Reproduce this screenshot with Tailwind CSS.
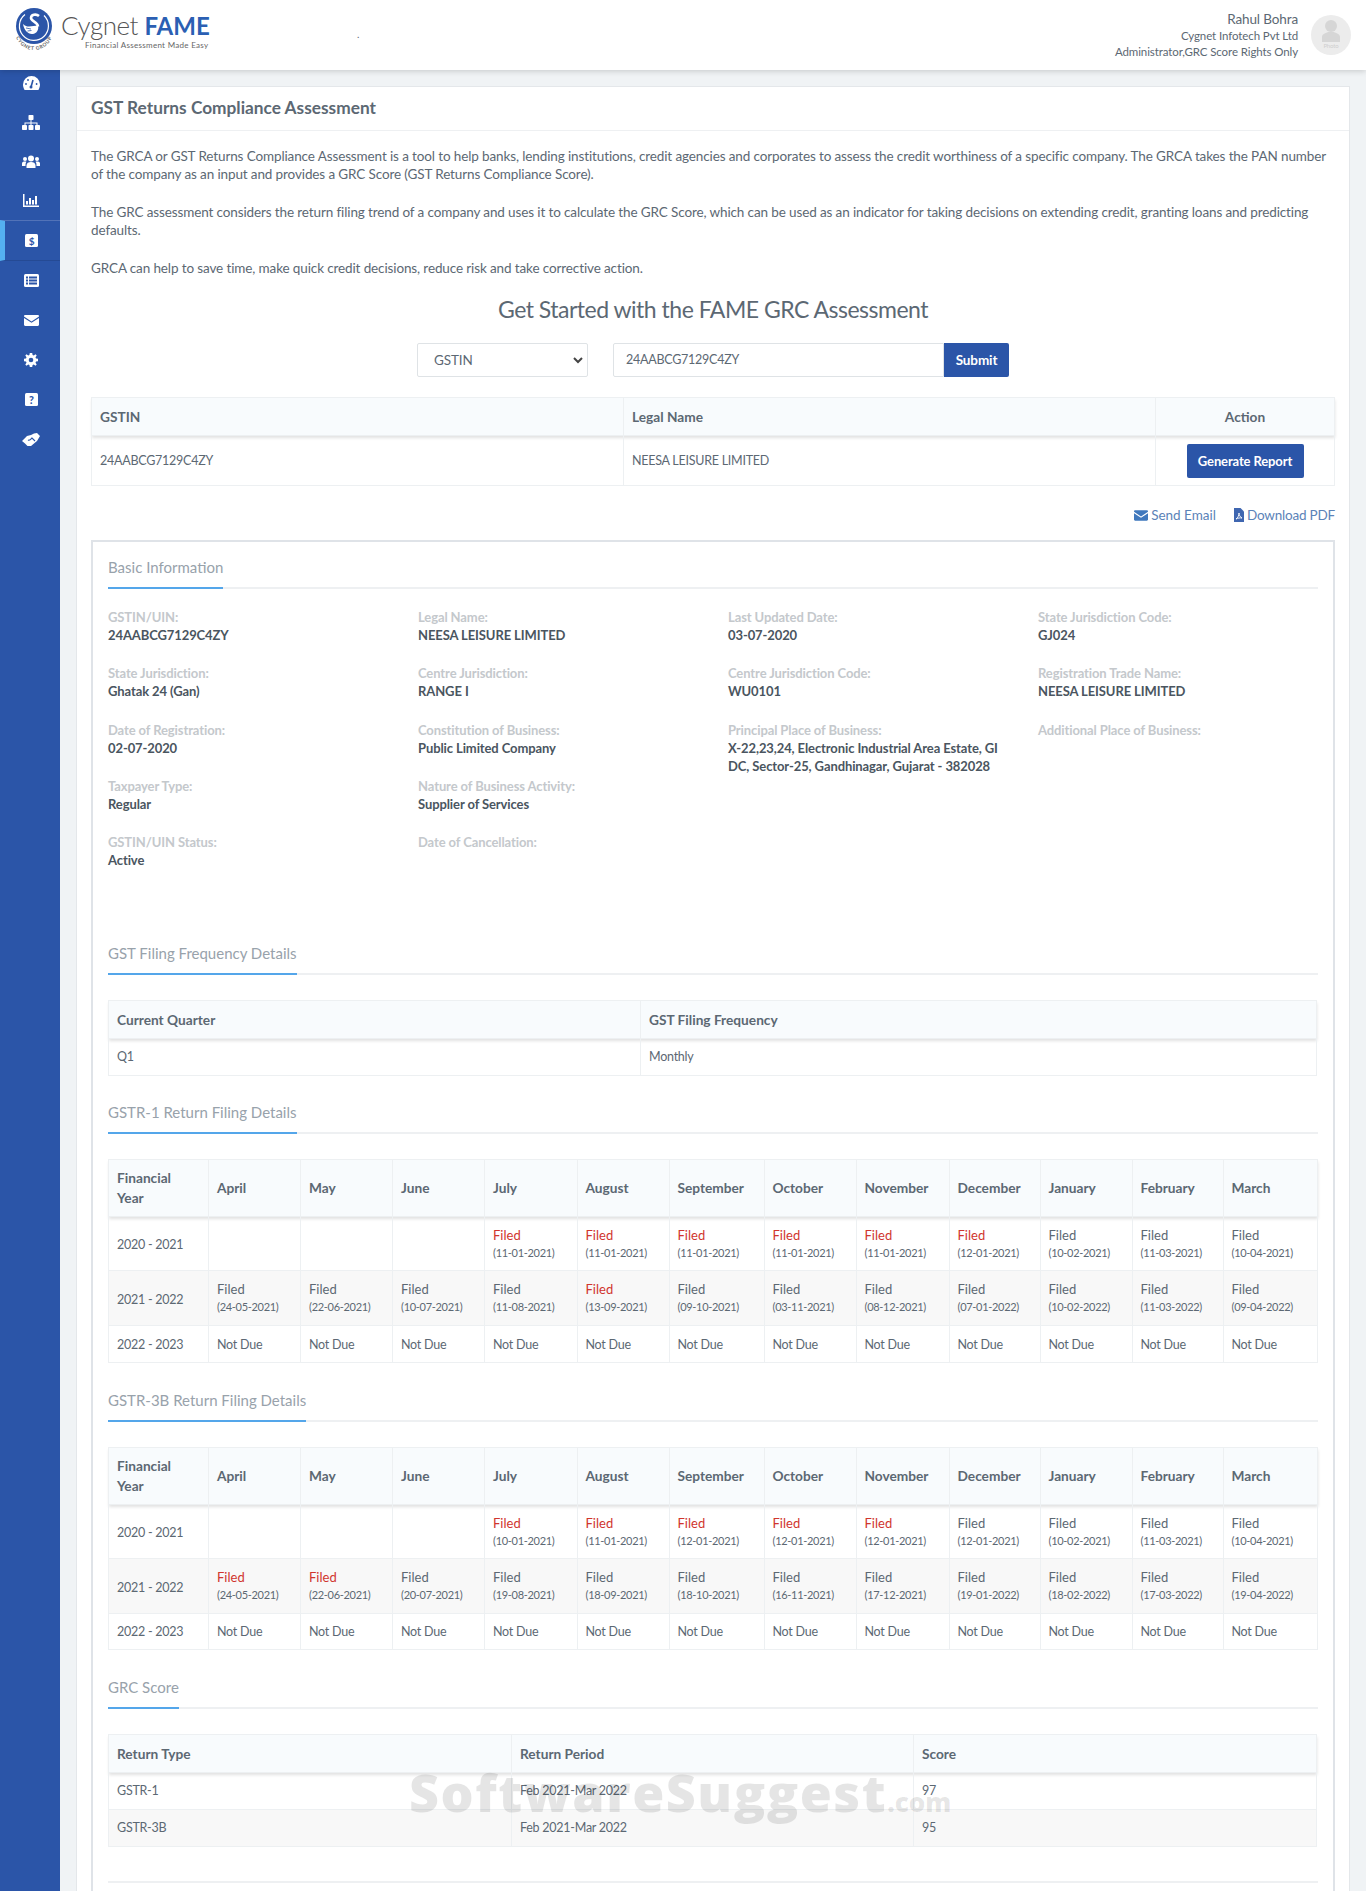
<!DOCTYPE html>
<html lang="en">
<head>
  <meta charset="UTF-8" />
  <title>GST Returns Compliance Assessment</title>
  <script src="https://cdn.jsdelivr.net/npm/@tailwindcss/browser@4"></script>
</head>
<body class="bg-[#f0f3f5] text-[#5c6873] font-['Lato',sans-serif] text-[13.5px] tracking-[-0.12px]">
  <div class="w-[1366px] h-[1891px] overflow-hidden relative">

    <!-- header -->
    <header class="relative z-10 h-[70px] bg-white shadow-[0_1px_6px_rgba(0,0,0,0.18)] flex items-start">
      <div class="w-[216px] h-[60px] flex items-start">
        <svg class="ml-[12px] mt-[5px]" width="44" height="50" viewBox="0 0 44 50">
          <defs><path id="logoArc" d="M3 26a19 19 0 0 0 38 0"/></defs>
          <circle cx="22" cy="21" r="18" fill="#2b55a8"/>
          <path d="M13 9.500A14.500 14.500 0 1 0 32 10.500" fill="none" stroke="#fff" stroke-width="1.200"/>
          <path d="M27 11c-3-2.500-8-1.500-8 2 0 3.500 7 4 7 8.500" fill="none" stroke="#fff" stroke-width="2.600"/>
          <path d="M11 19c2 2 4 2.500 6 2.500l9-1c1 4-1 8-5.500 8.500-4.500.4-8.500-4-9.500-10z" fill="#fff"/>
          <path d="M14 23l5 1M15.500 26l4-.5" stroke="#2b55a8" stroke-width=".8"/>
          <text font-size="5" font-weight="700" fill="#666" letter-spacing="0.7"><textPath href="#logoArc" startOffset="50%" text-anchor="middle">CYGNET GROUP</textPath></text>
        </svg>
        <div class="ml-[5px] mt-[11px] whitespace-nowrap tracking-normal">
          <div class="leading-[29px] text-[26px] font-light tracking-[-0.5px] text-[#555]">Cygnet <span class="text-[24px] font-bold tracking-normal text-[#2b5fb3]">FAME</span></div>
          <div class="text-[8px] leading-[10px] ml-[24px] tracking-[0.3px] text-[#666]">Financial Assessment Made Easy</div>
        </div>
      </div>
      <div class="ml-[141px] mt-[28px] text-[10px] leading-[12px]">.</div>
      <div class="ml-auto mt-[11px] text-right">
        <div class="text-[13.500px] leading-[17px]">Rahul Bohra</div>
        <div class="text-[11.500px] tracking-[-0.1px] leading-[16px]">Cygnet Infotech Pvt Ltd</div>
        <div class="text-[11.500px] tracking-[-0.1px] leading-[16px]">Administrator,GRC Score Rights Only</div>
      </div>
      <div class="ml-[13px] mr-[15px] mt-[15px] w-[40px] h-[40px] rounded-full bg-[#ececec] flex flex-col items-center overflow-hidden">
        <svg class="mt-[5px]" width="20" height="22" viewBox="0 0 20 22"><circle cx="10" cy="6" r="6" fill="#d6d6d6"/><path d="M1 22v-5c0-3 4-4 6-5h6c2 1 6 2 6 5v5z" fill="#d6d6d6"/></svg>
        <div class="text-[6px] leading-[7px] text-[#cfcfcf]">Photo</div>
      </div>
    </header>

    <div class="flex">
      <!-- sidebar -->
      <nav class="w-[60px] h-[1821px] bg-[#2b55a8] shrink-0 flex flex-col">
        <div class="-mt-[7px] h-[40px] pl-[2px] flex items-center justify-center"><svg width="17" height="14" viewBox="0 0 17 14"><path d="M8.500 0A8.500 8.500 0 0 0 0 8.500c0 2 .6 3.700 1.600 5.500h13.800c1-1.800 1.600-3.500 1.600-5.500A8.500 8.500 0 0 0 8.500 0z" fill="#fff"/><path d="M8 11l2-7" stroke="#2b55a8" stroke-width="1.600"/><circle cx="8" cy="11" r="1.500" fill="#2b55a8"/><circle cx="3" cy="8" r=".9" fill="#2b55a8"/><circle cx="5" cy="4" r=".9" fill="#2b55a8"/><circle cx="13.600" cy="8" r=".9" fill="#2b55a8"/></svg></div>
        <div class="h-[39px] pl-[2px] flex items-center justify-center"><svg width="18" height="15" viewBox="0 0 18 15" fill="#fff"><rect x="6.500" y="0" width="5" height="5" rx=".8"/><rect x="0" y="10" width="5" height="5" rx=".8"/><rect x="6.500" y="10" width="5" height="5" rx=".8"/><rect x="13" y="10" width="5" height="5" rx=".8"/><path d="M8.500 5h1v2.500h6V10h-1V8.500h-5V10h-1V8.500h-5V10h-1V7.500h6z"/></svg></div>
        <div class="h-[39px] pl-[2px] flex items-center justify-center"><svg width="18" height="13" viewBox="0 0 18 13" fill="#fff"><circle cx="9" cy="3.500" r="3"/><circle cx="3" cy="4" r="2"/><circle cx="15" cy="4" r="2"/><path d="M4.500 13v-2.500c0-2.500 2-3.500 4.500-3.500s4.500 1 4.500 3.500V13z"/><path d="M3.500 11H0V8.500C0 7 1.300 6.500 3 6.500c.6 0 1 .1 1.400.3C3.800 7.700 3.500 8.800 3.500 11zM14.500 11H18V8.500c0-1.500-1.300-2-3-2-.6 0-1 .1-1.400.3.600.9.900 2 .9 4.200z"/></svg></div>
        <div class="h-[39px] pl-[2px] flex items-center justify-center"><svg width="16" height="13" viewBox="0 0 16 13" fill="#fff"><path d="M0 0h1.500v11.500H16V13H0z"/><rect x="3" y="7" width="2" height="3.500"/><rect x="6" y="4" width="2" height="6.500"/><rect x="9" y="6" width="2" height="4.500"/><rect x="12" y="2" width="2" height="8.500"/></svg></div>
        <div class="h-[41px] border-t border-t-[#5273b8] border-b border-b-[#254a94] border-l-[5px] border-l-[#54b0f0] pr-[3px] flex items-center justify-center"><svg width="13" height="13" viewBox="0 0 13 13"><rect width="13" height="13" rx="1.500" fill="#fff"/><text x="6.500" y="10.500" text-anchor="middle" font-size="10" font-weight="700" fill="#2b55a8">$</text></svg></div>
        <div class="h-[39px] pl-[2px] flex items-center justify-center"><svg width="15" height="13" viewBox="0 0 15 13"><rect width="15" height="13" rx="1.500" fill="#fff"/><g fill="#2b55a8"><rect x="2" y="2.500" width="2" height="2"/><rect x="2" y="5.500" width="2" height="2"/><rect x="2" y="8.500" width="2" height="2"/><rect x="5" y="2.500" width="8" height="2"/><rect x="5" y="5.500" width="8" height="2"/><rect x="5" y="8.500" width="8" height="2"/></g></svg></div>
        <div class="h-[40px] pl-[2px] flex items-center justify-center"><svg width="15" height="11" viewBox="0 0 15 11" fill="#fff"><path d="M1.200 0h12.600c.6 0 1.200.5 1.200 1.200v.4L7.500 6.500 0 1.600v-.4C0 .5.600 0 1.200 0z"/><path d="M0 3l7.500 4.800L15 3v6.800c0 .7-.6 1.200-1.200 1.200H1.200C.6 11 0 10.500 0 9.800z"/></svg></div>
        <div class="h-[40px] pl-[2px] flex items-center justify-center"><svg width="14" height="14" viewBox="0 0 14 14"><path d="M5.800 0h2.400l.4 2 1.200.5L11.500 1.300l1.200 1.200-1.200 1.700.5 1.200 2 .4v2.400l-2 .4-.5 1.200 1.200 1.700-1.200 1.200-1.700-1.200-1.200.5-.4 2H5.800l-.4-2-1.200-.5-1.700 1.200-1.200-1.200 1.200-1.700-.5-1.200-2-.4V5.800l2-.4.5-1.200-1.200-1.700 1.200-1.200 1.700 1.200 1.200-.5z" fill="#fff"/><circle cx="7" cy="7" r="2.300" fill="#2b55a8"/></svg></div>
        <div class="h-[39px] pl-[2px] flex items-center justify-center"><svg width="13" height="13" viewBox="0 0 13 13"><rect width="13" height="13" rx="1.500" fill="#fff"/><text x="6.500" y="10.500" text-anchor="middle" font-size="10.500" font-weight="900" fill="#2b55a8">?</text></svg></div>
        <div class="h-[40px] pl-[2px] flex items-center justify-center"><svg width="18" height="13" viewBox="0 0 18 13"><path d="M0 8l5-5 4-1 3-1.500 3-.5 3 3-3 5-6 5-3 .5-3-3z" fill="#fff"/><path d="M6 7c2 1 3-1 4-2l3 3" fill="none" stroke="#2b55a8" stroke-width="1.100"/></svg></div>
      </nav>

      <!-- main -->
      <main class="flex-1 pt-[16px] px-[16px]">
        <div class="bg-white border border-[#e4e7ea] h-[1900px]">
          <h1 class="h-[44px] px-[14px] pb-[1px] border-b border-[#eef0f2] flex items-center text-[17.300px] tracking-normal font-bold">GST Returns Compliance Assessment</h1>

          <div class="px-[14px] pt-[16px] leading-[18px]">
            <p>The GRCA or GST Returns Compliance Assessment is a tool to help banks, lending institutions, credit agencies and corporates to assess the credit worthiness of a specific company. The GRCA takes the PAN number of the company as an input and provides a GRC Score (GST Returns Compliance Score).</p>
            <p class="mt-[20px]">The GRC assessment considers the return filing trend of a company and uses it to calculate the GRC Score, which can be used as an indicator for taking decisions on extending credit, granting loans and predicting defaults.</p>
            <p class="mt-[20px]">GRCA can help to save time, make quick credit decisions, reduce risk and take corrective action.</p>

            <h2 class="mt-[16px] text-center text-[23px] tracking-[-0.5px] leading-[32px]">Get Started with the FAME GRC Assessment</h2>

            <form class="mt-[18px] h-[34px] flex" onsubmit="return false">
              <div class="ml-[326px] w-[171px] border border-[#dfe3e6] rounded-[2px] pl-[16px] pr-[4px] flex items-center justify-between">
                <span>GSTIN</span>
                <svg width="10" height="7" viewBox="0 0 10 7"><path d="M1 1l4 4 4-4" fill="none" stroke="#444" stroke-width="2"/></svg>
              </div>
              <div class="ml-[25px] w-[331px] border border-[#dfe3e6] rounded-l-[2px] pl-[12px] flex items-center text-[12.500px] tracking-[-0.25px]">24AABCG7129C4ZY</div>
              <button class="w-[65px] bg-[#2b55a8] text-white font-bold rounded-r-[2px]">Submit</button>
            </form>

            <table class="mt-[20px] w-[1244px] table-fixed border-collapse">
              <thead>
                <tr class="h-[38px] bg-[#f8fbfd] shadow-[0_2px_3px_rgba(0,0,0,0.12)]">
                  <th class="w-[532px] border border-[#edf0f2] px-[8px] text-left text-[13.700px] tracking-normal font-bold">GSTIN</th>
                  <th class="w-[532px] border border-[#edf0f2] px-[8px] text-left text-[13.700px] tracking-normal font-bold">Legal Name</th>
                  <th class="border border-[#edf0f2] px-[8px] text-center text-[13.700px] tracking-normal font-bold">Action</th>
                </tr>
              </thead>
              <tbody>
                <tr class="h-[50px]">
                  <td class="border border-[#edf0f2] px-[8px] text-[12.500px] tracking-[-0.25px]">24AABCG7129C4ZY</td>
                  <td class="border border-[#edf0f2] px-[8px] text-[12.500px] tracking-[-0.25px]">NEESA LEISURE LIMITED</td>
                  <td class="border border-[#edf0f2] text-center"><button class="w-[117px] h-[34px] bg-[#2b55a8] text-white text-[13px] font-bold rounded-[2px]">Generate Report</button></td>
                </tr>
              </tbody>
            </table>

            <div class="mt-[20px] h-[18px] flex justify-end items-center gap-[18px] text-[#5b83b8] text-[13.500px] tracking-[-0.2px]">
              <span class="flex items-center gap-[3px] tracking-normal"><svg width="14" height="11" viewBox="0 0 15 11" fill="#3f78bd"><path d="M1.200 0h12.600c.6 0 1.200.5 1.200 1.200v.4L7.500 6.500 0 1.600v-.4C0 .5.600 0 1.200 0z"/><path d="M0 3l7.500 4.800L15 3v6.800c0 .7-.6 1.200-1.200 1.200H1.200C.6 11 0 10.500 0 9.800z"/></svg>Send Email</span>
              <span class="flex items-center gap-[3px]"><svg width="10" height="14" viewBox="0 0 10 14"><path d="M0 0h6.500L10 3.500V14H0z" fill="#3f66b0"/><path d="M2 11c2-1 3-4 3-6 0 2 1 4 3 5-2-.3-4 0-6 1z" fill="none" stroke="#fff" stroke-width=".9"/></svg>Download PDF</span>
            </div>

            <!-- report box -->
            <div class="mt-[16px] border-2 border-[#dfe3e8] px-[15px] h-[1400px] relative">
              <div id="basic"></div>
            </div>
          </div>
        </div>
      </main>
    </div>

    <!-- watermark over the score table -->
    <div class="absolute left-[409px] top-[1761px] font-['Open_Sans',sans-serif] text-[52px] leading-[62px] font-extrabold tracking-[1.5px] text-black/10 whitespace-nowrap pointer-events-none">SoftwareSuggest<span class="text-[26px] tracking-normal">.com</span></div>
  </div>

  <script>
    const sectionHead = (title, top) => `
      <div class="${top} h-[34px] border-b-2 border-[#eef0f2] flex">
        <div class="h-[34px] border-b-2 border-[#54a6ea] text-[15px] tracking-normal leading-[24px] text-[#98a2ab]">${title}</div>
      </div>`;

    const info = [
      ['GSTIN/UIN:', '24AABCG7129C4ZY'], ['Legal Name:', 'NEESA LEISURE LIMITED'], ['Last Updated Date:', '03-07-2020'], ['State Jurisdiction Code:', 'GJ024'],
      ['State Jurisdiction:', 'Ghatak 24 (Gan)'], ['Centre Jurisdiction:', 'RANGE I'], ['Centre Jurisdiction Code:', 'WU0101'], ['Registration Trade Name:', 'NEESA LEISURE LIMITED'],
      ['Date of Registration:', '02-07-2020'], ['Constitution of Business:', 'Public Limited Company'], ['Principal Place of Business:', 'X-22,23,24, Electronic Industrial Area Estate, GI DC, Sector-25, Gandhinagar, Gujarat - 382028'], ['Additional Place of Business:', ''],
      ['Taxpayer Type:', 'Regular'], ['Nature of Business Activity:', 'Supplier of Services'], ['', ''], ['', ''],
      ['GSTIN/UIN Status:', 'Active'], ['Date of Cancellation:', ''], ['', ''], ['', '']
    ];

    const months = ['April', 'May', 'June', 'July', 'August', 'September', 'October', 'November', 'December', 'January', 'February', 'March'];
    const monthWidths = ['w-[92px]', 'w-[92px]', 'w-[92px]', 'w-[92.500px]', 'w-[92px]', 'w-[95px]', 'w-[92px]', 'w-[93px]', 'w-[91px]', 'w-[92px]', 'w-[91px]', 'w-[94.500px]'];

    // r marks a red "Filed"
    const gstr1 = [
      ['2020 - 2021', ['', '', '', 'r11-01-2021', 'r11-01-2021', 'r11-01-2021', 'r11-01-2021', 'r11-01-2021', 'r12-01-2021', '10-02-2021', '11-03-2021', '10-04-2021']],
      ['2021 - 2022', ['24-05-2021', '22-06-2021', '10-07-2021', '11-08-2021', 'r13-09-2021', '09-10-2021', '03-11-2021', '08-12-2021', '07-01-2022', '10-02-2022', '11-03-2022', '09-04-2022']]
    ];
    const gstr3b = [
      ['2020 - 2021', ['', '', '', 'r10-01-2021', 'r11-01-2021', 'r12-01-2021', 'r12-01-2021', 'r12-01-2021', '12-01-2021', '10-02-2021', '11-03-2021', '10-04-2021']],
      ['2021 - 2022', ['r24-05-2021', 'r22-06-2021', '20-07-2021', '19-08-2021', '18-09-2021', '18-10-2021', '16-11-2021', '17-12-2021', '19-01-2022', '18-02-2022', '17-03-2022', '19-04-2022']]
    ];

    const th = 'border border-[#edf0f2] px-[8px] text-left text-[13.700px] tracking-normal font-bold';
    const td = 'border border-[#edf0f2] px-[8px] text-[12.500px] tracking-[-0.25px]';

    function filedCell(v) {
      if (!v) return `<td class="${td}"></td>`;
      const red = v[0] === 'r';
      const date = red ? v.slice(1) : v;
      return `<td class="${td} leading-[18px]"><div class="text-[13px] tracking-normal ${red ? 'text-[#d0352e]' : ''}">Filed</div><div class="text-[11px] tracking-[-0.3px]">(${date})</div></td>`;
    }

    function filingTable(rows, top, lastRow) {
      const heads = months.map((m, i) => `<th class="${th} ${monthWidths[i]}">${m}</th>`).join('');
      const body = rows.map((r, i) => `
        <tr class="${i ? 'h-[55px] bg-[#f8f8f8]' : 'h-[54px]'}"><td class="${td} pt-[3px]">${r[0]}</td>${r[1].map(filedCell).join('')}</tr>`).join('');
      const notDue = months.map(() => `<td class="${td} pt-[1px]">Not Due</td>`).join('');
      return `<table class="${top} w-[1209px] table-fixed border-collapse">
        <thead><tr class="h-[57px] bg-[#f8fbfd] shadow-[0_2px_3px_rgba(0,0,0,0.12)]"><th class="${th} w-[100px] leading-[20px]">Financial Year</th>${heads}</tr></thead>
        <tbody>${body}<tr class="${lastRow}"><td class="${td} pt-[1px]">2022 - 2023</td>${notDue}</tr></tbody>
      </table>`;
    }

    const infoGrid = info.map(f => `
      <div class="leading-[18px] pr-[20px] text-[13px] tracking-[-0.1px] font-bold">
        <div class="text-[#c4c8cc]">${f[0]}</div>
        <div class="text-[#4a5560]">${f[1]}</div>
      </div>`).join('');

    document.getElementById('basic').innerHTML = `
      ${sectionHead('Basic Information', 'mt-[13px]')}
      <div class="mt-[19px] grid grid-cols-[310px_310px_310px_280px] auto-rows-[56.300px]">${infoGrid}</div>
      ${sectionHead('GST Filing Frequency Details', 'mt-[52px]')}
      <table class="mt-[25px] w-[1209px] table-fixed border-collapse">
        <thead><tr class="h-[38px] bg-[#f8fbfd] shadow-[0_2px_3px_rgba(0,0,0,0.12)]"><th class="${th} w-[532px]">Current Quarter</th><th class="${th}">GST Filing Frequency</th></tr></thead>
        <tbody><tr class="h-[37px]"><td class="${td}">Q1</td><td class="${td}">Monthly</td></tr></tbody>
      </table>
      ${sectionHead('GSTR-1 Return Filing Details', 'mt-[24px]')}
      ${filingTable(gstr1, 'mt-[25px]', 'h-[37px]')}
      ${sectionHead('GSTR-3B Return Filing Details', 'mt-[25px]')}
      ${filingTable(gstr3b, 'mt-[25px]', 'h-[36px]')}
      ${sectionHead('GRC Score', 'mt-[25px]')}
      <table class="mt-[25px] w-[1209px] table-fixed border-collapse">
        <thead><tr class="h-[38px] bg-[#f8fbfd] shadow-[0_2px_3px_rgba(0,0,0,0.12)]"><th class="${th} w-[403px]">Return Type</th><th class="${th} w-[402px]">Return Period</th><th class="${th}">Score</th></tr></thead>
        <tbody>
          <tr class="h-[37px]"><td class="${td}">GSTR-1</td><td class="${td}">Feb 2021-Mar 2022</td><td class="${td}">97</td></tr>
          <tr class="h-[37px] bg-[#f8f8f8]"><td class="${td}">GSTR-3B</td><td class="${td}">Feb 2021-Mar 2022</td><td class="${td}">95</td></tr>
        </tbody>
      </table>
      <div class="mt-[34px] border-t-2 border-[#eef0f2]"></div>`;
  </script>
</body>
</html>
